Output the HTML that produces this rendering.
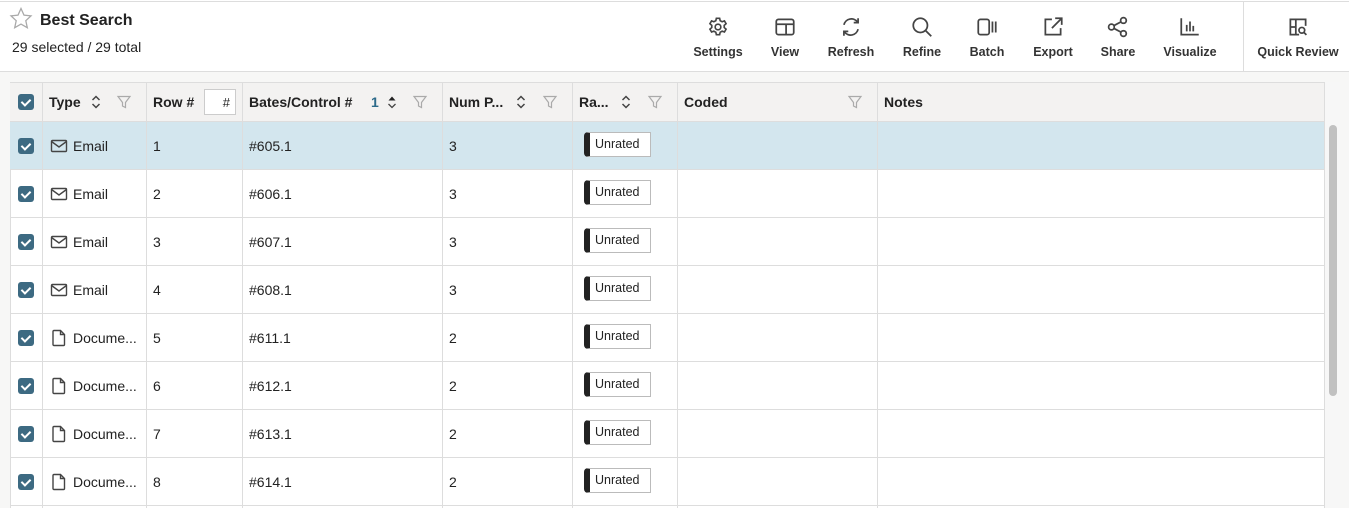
<!DOCTYPE html>
<html><head><meta charset="utf-8"><style>
*{box-sizing:border-box;margin:0;padding:0}
body{width:1349px;height:508px;overflow:hidden;background:#fff;font-family:"Liberation Sans",sans-serif;color:#222;position:relative}
.a{position:absolute}
.tb{position:absolute;top:0;text-align:center;font-size:12.5px;font-weight:bold;color:#333}
.tb svg{position:absolute;top:15px;left:50%;margin-left:-12px}
.tb span{position:absolute;top:45px;left:0;right:0;white-space:nowrap}
.cell{position:absolute;font-size:14px;display:flex;align-items:center}
.hd{font-weight:bold;font-size:14px}
.cb{position:absolute;width:16px;height:16px;border-radius:3px;background:#3d6a82}
.cb:after{content:"";position:absolute;left:5px;top:3px;width:4px;height:7px;border:solid #fff;border-width:0 2px 2px 0;transform:rotate(45deg)}
.vl{position:absolute;top:82px;width:1px;height:426px;background:#ddd}
.hl{position:absolute;left:10px;width:1314px;height:1px;background:#ddd}
.badge{position:absolute;left:584px;width:67px;height:25px;border:1px solid #bbb;border-left:6px solid #222;border-radius:4px 0 0 4px;background:#fff;font-size:12.5px;padding-left:5px;line-height:23px}
</style></head><body>
<div class="a" style="left:0;top:1px;width:1349px;height:1px;background:#ddd"></div>
<svg class="a" style="left:9px;top:7px" width="24" height="22" viewBox="0 0 24 22"><path d="M12 1.5l3 6.6 7 .8-5.2 4.8 1.5 7-6.3-3.6-6.3 3.6 1.5-7L2 8.9l7-.8z" fill="none" stroke="#aaa" stroke-width="1.3"/></svg>
<div class="a" style="left:40px;top:12px;font-size:16px;font-weight:bold">Best Search</div>
<div class="a" style="left:12px;top:39px;font-size:14px">29 selected / 29 total</div>

<div class="tb" style="left:688px;width:60px"><svg width="24" height="24" viewBox="0 0 22 22" fill="none" stroke="#444" stroke-width="1.5"><path d="M9.5 3h3l.5 2.2 1.8 1 2.1-.8 1.5 2.6-1.7 1.5v2l1.7 1.5-1.5 2.6-2.1-.8-1.8 1-.5 2.2h-3l-.5-2.2-1.8-1-2.1.8-1.5-2.6 1.7-1.5v-2L3.6 8l1.5-2.6 2.1.8 1.8-1z"/><circle cx="11" cy="11" r="2.6"/></svg><span>Settings</span></div>
<div class="tb" style="left:755px;width:60px"><svg width="24" height="24" viewBox="0 0 22 22" fill="none" stroke="#444" stroke-width="1.6"><rect x="3" y="4" width="16" height="14" rx="2"/><path d="M3 8.5h16M12 8.5V18"/></svg><span>View</span></div>
<div class="tb" style="left:821px;width:60px"><svg width="24" height="24" viewBox="0 0 22 22" fill="none" stroke="#444" stroke-width="1.6"><path d="M4.5 9a7 7 0 0 1 12.5-2.5M17.5 13a7 7 0 0 1-12.5 2.5"/><path d="M17.5 3v4h-4M4.5 19v-4h4"/></svg><span>Refresh</span></div>
<div class="tb" style="left:892px;width:60px"><svg width="24" height="24" viewBox="0 0 22 22" fill="none" stroke="#444" stroke-width="1.6"><circle cx="9.5" cy="9.5" r="6.5"/><path d="M14.2 14.2l5.3 5.3"/></svg><span>Refine</span></div>
<div class="tb" style="left:957px;width:60px"><svg width="24" height="24" viewBox="0 0 22 22" fill="none" stroke="#444" stroke-width="1.6"><rect x="3" y="4" width="10" height="14" rx="2"/><path d="M16 6v10M19 6v10"/></svg><span>Batch</span></div>
<div class="tb" style="left:1023px;width:60px"><svg width="24" height="24" viewBox="0 0 22 22" fill="none" stroke="#444" stroke-width="1.6"><path d="M10 4H4v14h14v-6"/><path d="M13 3h6v6M19 3l-9 9"/></svg><span>Export</span></div>
<div class="tb" style="left:1088px;width:60px"><svg width="24" height="24" viewBox="0 0 22 22" fill="none" stroke="#444" stroke-width="1.6"><circle cx="5" cy="11" r="2.6"/><circle cx="16" cy="5" r="2.6"/><circle cx="16" cy="17" r="2.6"/><path d="M7.3 9.7l6.4-3.4M7.3 12.3l6.4 3.4"/></svg><span>Share</span></div>
<div class="tb" style="left:1155px;width:70px"><svg width="24" height="24" viewBox="0 0 22 22" fill="none" stroke="#444" stroke-width="1.6"><path d="M3 3v15h16M8 9v6M11 6v9M14 10v5"/></svg><span>Visualize</span></div>
<div class="a" style="left:1243px;top:2px;width:1px;height:69px;background:#ddd"></div>
<div class="tb" style="left:1252px;width:92px"><svg width="24" height="24" viewBox="0 0 22 22" fill="none" stroke="#444" stroke-width="1.6"><path d="M12 18H4V4h14v6"/><path d="M4 11h5M9 4v14"/><circle cx="14.5" cy="14" r="2.6"/><path d="M16.4 15.9l2.3 2.3"/></svg><span>Quick Review</span></div>

<div class="a" style="left:0;top:71px;width:1349px;height:437px;background:#f7f7f6;border-top:1px solid #ddd"></div>
<div class="a" style="left:10px;top:82px;width:1330px;height:426px;background:#fff;border:1px solid #ddd;border-bottom:none"></div>
<div class="a" style="left:10px;top:82px;width:1314px;height:40px;background:#f3f2f1;border-top:1px solid #ddd"></div>
<div class="a" style="left:10px;top:122px;width:1314px;height:47px;background:#d3e6ee"></div>
<div class="a" style="left:1324px;top:82px;width:16px;height:426px;background:#f7f7f7;border-left:1px solid #ddd"></div>
<div class="a" style="left:1329px;top:125px;width:8px;height:271px;border-radius:4px;background:#c1c1c1"></div>

<div class="hl" style="top:121px"></div>
<div class="hl" style="top:169px"></div><div class="hl" style="top:217px"></div><div class="hl" style="top:265px"></div><div class="hl" style="top:313px"></div><div class="hl" style="top:361px"></div><div class="hl" style="top:409px"></div><div class="hl" style="top:457px"></div><div class="hl" style="top:505px"></div>
<div class="vl" style="left:42px"></div><div class="vl" style="left:146px"></div><div class="vl" style="left:242px"></div><div class="vl" style="left:442px"></div><div class="vl" style="left:572px"></div><div class="vl" style="left:677px"></div><div class="vl" style="left:877px"></div>

<div class="cb" style="left:18px;top:94px"></div>
<div class="cell hd" style="left:49px;top:94px">Type</div>
<svg class="a" style="left:90px;top:94px" width="12" height="16" viewBox="0 0 12 16" fill="none" stroke="#444" stroke-width="1.5"><path d="M2.5 6l3.5-3.5L9.5 6M2.5 10l3.5 3.5L9.5 10"/></svg>
<svg class="a" style="left:116px;top:94px" width="16" height="16" viewBox="0 0 16 16" fill="none" stroke="#aaa" stroke-width="1.2"><path d="M2 2.5h12L9.5 8.5v5l-3-1.5V8.5z"/></svg>
<div class="cell hd" style="left:153px;top:94px">Row #</div>
<div class="a" style="left:204px;top:89px;width:32px;height:26px;border:1px solid #ccc;background:#fff;font-size:13px;text-align:right;padding:5px 5px 0 0">#</div>
<div class="cell hd" style="left:249px;top:94px">Bates/Control #</div>
<div class="cell hd" style="left:371px;top:94px;color:#2c6a8a">1</div>
<svg class="a" style="left:386px;top:94px" width="12" height="16" viewBox="0 0 12 16"><path d="M2.5 6.5L6 2.5l3.5 4z" fill="#222"/><path d="M2.5 10l3.5 3.5L9.5 10" fill="none" stroke="#444" stroke-width="1.3"/></svg>
<svg class="a" style="left:412px;top:94px" width="16" height="16" viewBox="0 0 16 16" fill="none" stroke="#aaa" stroke-width="1.2"><path d="M2 2.5h12L9.5 8.5v5l-3-1.5V8.5z"/></svg>
<div class="cell hd" style="left:449px;top:94px">Num P...</div>
<svg class="a" style="left:515px;top:94px" width="12" height="16" viewBox="0 0 12 16" fill="none" stroke="#444" stroke-width="1.5"><path d="M2.5 6l3.5-3.5L9.5 6M2.5 10l3.5 3.5L9.5 10"/></svg>
<svg class="a" style="left:542px;top:94px" width="16" height="16" viewBox="0 0 16 16" fill="none" stroke="#aaa" stroke-width="1.2"><path d="M2 2.5h12L9.5 8.5v5l-3-1.5V8.5z"/></svg>
<div class="cell hd" style="left:579px;top:94px">Ra...</div>
<svg class="a" style="left:620px;top:94px" width="12" height="16" viewBox="0 0 12 16" fill="none" stroke="#444" stroke-width="1.5"><path d="M2.5 6l3.5-3.5L9.5 6M2.5 10l3.5 3.5L9.5 10"/></svg>
<svg class="a" style="left:647px;top:94px" width="16" height="16" viewBox="0 0 16 16" fill="none" stroke="#aaa" stroke-width="1.2"><path d="M2 2.5h12L9.5 8.5v5l-3-1.5V8.5z"/></svg>
<div class="cell hd" style="left:684px;top:94px">Coded</div>
<svg class="a" style="left:847px;top:94px" width="16" height="16" viewBox="0 0 16 16" fill="none" stroke="#aaa" stroke-width="1.2"><path d="M2 2.5h12L9.5 8.5v5l-3-1.5V8.5z"/></svg>
<div class="cell hd" style="left:884px;top:94px">Notes</div>

<div id="rows"></div>
<script>
var d=[["Email",1,605,3],["Email",2,606,3],["Email",3,607,3],["Email",4,608,3],["Docume...",5,611,2],["Docume...",6,612,2],["Docume...",7,613,2],["Docume...",8,614,2]];
var h="";
d.forEach(function(r,i){var t=122+48*i,ty=t+16;
var ic=r[0]=="Email"?'<svg class="a" style="left:50px;top:'+(t+16)+'px" width="18" height="16" viewBox="0 0 18 16" fill="none" stroke="#444" stroke-width="1.4"><rect x="1.5" y="2.5" width="15" height="11" rx="1"/><path d="M1.5 3.5L9 9l7.5-5.5"/></svg>':'<svg class="a" style="left:51px;top:'+(t+15)+'px" width="16" height="18" viewBox="0 0 16 18" fill="none" stroke="#444" stroke-width="1.4"><path d="M3 1.5h6.5L13.5 5.5v10a1 1 0 0 1-1 1h-9.5a1 1 0 0 1-1-1v-13a1 1 0 0 1 1-1z M9.5 1.5v4h4"/></svg>';
h+='<div class="cb" style="left:18px;top:'+(t+16)+'px"></div>'+ic+
'<div class="cell" style="left:73px;top:'+ty+'px">'+r[0]+'</div>'+
'<div class="cell" style="left:153px;top:'+ty+'px">'+r[1]+'</div>'+
'<div class="cell" style="left:249px;top:'+ty+'px">#'+r[2]+'.1</div>'+
'<div class="cell" style="left:449px;top:'+ty+'px">'+r[3]+'</div>'+
'<div class="badge" style="top:'+(t+10)+'px">Unrated</div>';});
document.getElementById("rows").innerHTML=h;
</script>
</body></html>
